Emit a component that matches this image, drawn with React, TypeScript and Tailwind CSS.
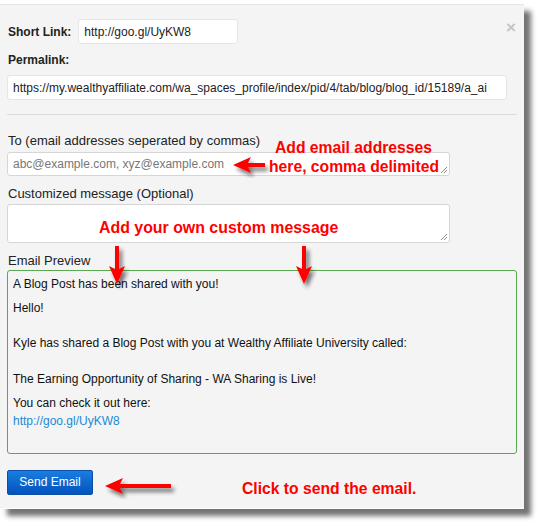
import { FC } from 'react';

const Arrow: FC<{ className: string; dir: 'left' | 'down'; len: number }> = ({ className, dir, len }) => {
  const w = dir === 'left' ? len + 10 : 30;
  const h = dir === 'left' ? 30 : len + 10;
  return (
    <svg className={className} width={w} height={h} viewBox={`0 0 ${w} ${h}`}>
      <defs>
        <filter id={`sh-${dir}-${len}`} x="-30%" y="-30%" width="160%" height="160%">
          <feGaussianBlur in="SourceAlpha" stdDeviation="2" />
          <feOffset dx="3" dy="4" result="b" />
          <feComponentTransfer>
            <feFuncA type="linear" slope="0.55" />
          </feComponentTransfer>
          <feMerge>
            <feMergeNode />
            <feMergeNode in="SourceGraphic" />
          </feMerge>
        </filter>
      </defs>
      {dir === 'left' ? (
        <g filter={`url(#sh-${dir}-${len})`} fill="#ff0000">
          <rect x="14" y="10" width={len - 16} height="4" />
          <polygon points="2,12 20,4 16,12 20,20" />
        </g>
      ) : (
        <g filter={`url(#sh-${dir}-${len})`} fill="#ff0000">
          <rect x="11" y="2" width="4" height={len - 16} />
          <polygon points={`13,${len} 5,${len - 18} 13,${len - 14} 21,${len - 18}`} />
        </g>
      )}
    </svg>
  );
};

const Grip: FC = () => (
  <svg className="absolute right-[1px] bottom-[1px]" width="8" height="8" viewBox="0 0 8 8">
    <path d="M7 1 L1 7 M7 4 L4 7" stroke="#8a8a8a" strokeWidth="1" />
  </svg>
);

const labelCls = 'text-[13px] leading-[15px] text-[#222] pl-[1px]';
const fieldCls = 'bg-white rounded-[3px] flex items-center px-[5px] text-[12px]';

export default function App() {
  return (
    <div className="min-h-[528px] bg-white pt-[4px]" style={{ fontFamily: '"Liberation Sans", Arial, sans-serif' }}>
      <div className="relative w-[524px] h-[505px] bg-[#f4f4f4] border-t border-[#e4e4e4] border-b border-b-white shadow-[7px_7px_5px_rgba(0,0,0,0.55)] px-[7px] flex flex-col">
        <span className="absolute right-[8px] top-[14px] text-[17px] leading-none font-bold text-[#c4c4c4]">×</span>

        <div className="flex items-center gap-[7px] pt-[14px] pl-[1px]">
          <span className="text-[12px] font-bold text-[#222]">Short Link:</span>
          <div className={`${fieldCls} w-[160px] h-[25px] border border-[#e6e6e6] text-[#222]`}>http://goo.gl/UyKW8</div>
        </div>

        <div className="flex flex-col gap-[8px] pt-[9px]">
          <span className="pl-[1px] text-[12px] leading-[14px] font-bold text-[#222]">Permalink:</span>
          <div className={`${fieldCls} w-[500px] h-[25px] border border-[#e6e6e6] text-[#222] overflow-hidden whitespace-nowrap`}>
            https://my.wealthyaffiliate.com/wa_spaces_profile/index/pid/4/tab/blog/blog_id/15189/a_ai
          </div>
        </div>

        <div className="mt-[14px] w-[510px] border-t border-[#dcdcdc]" />

        <div className="flex flex-col gap-[4px] mt-[18px]">
          <span className={labelCls}>To (email addresses seperated by commas)</span>
          <div className={`${fieldCls} relative w-[443px] h-[24px] border border-[#d6d6d6] text-[#777]`}>
            abc@example.com, xyz@example.com
            <Grip />
          </div>
        </div>

        <div className="flex flex-col gap-[3px] mt-[10px]">
          <span className={labelCls}>Customized message (Optional)</span>
          <div className="relative w-[443px] h-[39px] bg-white border border-[#d6d6d6] rounded-[3px]">
            <Grip />
          </div>
        </div>

        <div className="flex flex-col gap-[2px] mt-[10px]">
          <span className={labelCls}>Email Preview</span>
          <div className="w-[510px] h-[184px] border border-[#5aa84f] rounded-[3px] px-[5px] pt-[6px] text-[12px] leading-[14px] text-[#111] flex flex-col">
            <p>A Blog Post has been shared with you!</p>
            <p className="mt-[10px]">Hello!</p>
            <p className="mt-[21px]">Kyle has shared a Blog Post with you at Wealthy Affiliate University called:</p>
            <p className="mt-[22px]">The Earning Opportunity of Sharing - WA Sharing is Live!</p>
            <p className="mt-[10px]">You can check it out here:</p>
            <p className="mt-[4px] text-[#1a8ad4]">http://goo.gl/UyKW8</p>
          </div>
        </div>

        <div className="mt-[15px]">
          <button className="w-[86px] h-[25px] rounded-[2px] bg-gradient-to-b from-[#1a7ee0] to-[#0452bd] border border-[#0b4fa8] text-white text-[12px]">
            Send Email
          </button>
        </div>

        <span className="absolute left-[275px] top-[134px] text-[15.7px] leading-[18px] font-bold text-[#ff0000]">Add email addresses</span>
        <span className="absolute left-[269px] top-[153px] text-[15.7px] leading-[18px] font-bold text-[#ff0000]">here, comma delimited</span>
        <span className="absolute left-[99px] top-[214px] text-[15.9px] leading-[18px] font-bold text-[#ff0000]">Add your own custom message</span>
        <span className="absolute left-[242px] top-[475px] text-[15.7px] leading-[18px] font-bold text-[#ff0000]">Click to send the email.</span>

        <Arrow className="absolute left-[231px] top-[148px]" dir="left" len={36} />
        <Arrow className="absolute left-[104px] top-[239px]" dir="down" len={40} />
        <Arrow className="absolute left-[291px] top-[239px]" dir="down" len={40} />
        <Arrow className="absolute left-[103px] top-[469px]" dir="left" len={70} />
      </div>
    </div>
  );
}
